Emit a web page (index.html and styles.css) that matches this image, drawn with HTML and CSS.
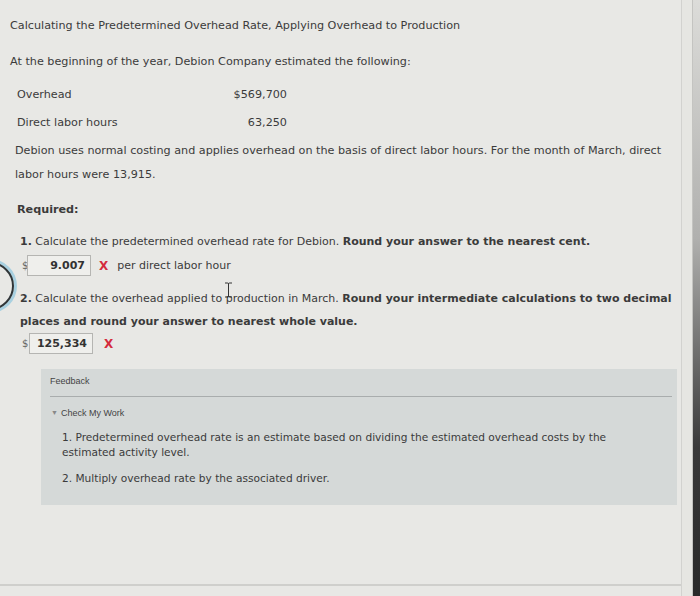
FILE: index.html
```
<!DOCTYPE html>
<html>
<head>
<meta charset="utf-8">
<link rel="stylesheet" href="styles.css">
</head>
<body>
<div class="screen">
  <div class="page">
    <h1 class="title">Calculating the Predetermined Overhead Rate, Applying Overhead to Production</h1>
    <p class="intro">At the beginning of the year, Debion Company estimated the following:</p>
    <div class="data">
      <span class="label">Overhead</span><span class="value">$569,700</span>
      <span class="label">Direct labor hours</span><span class="value">63,250</span>
    </div>
    <p class="desc">Debion uses normal costing and applies overhead on the basis of direct labor hours. For the month of March, direct labor hours were 13,915.</p>
    <div class="required">Required:</div>
    <div class="question q1"><b>1.</b> Calculate the predetermined overhead rate for Debion. <b>Round your answer to the nearest cent.</b></div>
    <div class="answer a1">
      <span class="dollar">$</span><span class="box">9.007</span><span class="wrong">X</span><span class="unit">per direct labor hour</span>
    </div>
    <div class="question q2">
      <div class="q-line"><b>2.</b> Calculate the overhead applied to production in March. <b>Round your intermediate calculations to two decimal</b></div>
      <div class="q-line"><b>places and round your answer to nearest whole value.</b></div>
    </div>
    <div class="answer a2">
      <span class="dollar">$</span><span class="box">125,334</span><span class="wrong">X</span>
    </div>
    <div class="feedback">
      <div class="fb-label">Feedback</div>
      <div class="fb-rule"></div>
      <div class="fb-check"><span class="tri">&#9660;</span>Check My Work</div>
      <ol class="fb-list">
        <li>Predetermined overhead rate is an estimate based on dividing the estimated overhead costs by the estimated activity level.</li>
        <li>Multiply overhead rate by the associated driver.</li>
      </ol>
    </div>
    <div class="bottom-line"></div>
  </div>
  <div class="edge"></div>
</div>
<div class="ring"></div>
<svg class="cursor" width="9" height="16" viewBox="0 0 9 16"><path d="M1 1 H3.5 Q4.5 1 4.5 2 V14 Q4.5 15 3.5 15 H1 M8 1 H5.5 Q4.5 1 4.5 2 M4.5 14 Q4.5 15 5.5 15 H8" fill="none" stroke="#333" stroke-width="1"/></svg>
</body>
</html>
```
FILE: styles.css
```
html, body {
  margin: 0;
  padding: 0;
}
body {
  width: 700px;
  height: 596px;
  overflow: hidden;
  background: #e8e8e5;
  font-family: "DejaVu Sans", Verdana, sans-serif;
  font-size: 11.2px;
  color: #3b3b3b;
  position: relative;
}
.screen {
  display: flex;
  height: 596px;
}
.page {
  width: 682px;
  padding: 18px 0 0 10px;
  box-sizing: border-box;
  display: flex;
  flex-direction: column;
  border-right: 1px solid #d2d2cf;
}
.edge {
  flex: 1;
  display: flex;
}
.edge::before {
  content: "";
  width: 10px;
  background: #e6e6e2;
  border-right: 1px solid #c4c4c1;
}
.edge::after {
  content: "";
  flex: 1;
  background: linear-gradient(180deg, #dcdcd9 0, #b0b0ae 40%, #3a3a3a 75%, #2a2a2a 100%);
}
.title {
  margin: 0;
  font-size: 11.2px;
  font-weight: normal;
  line-height: 16px;
}
.intro {
  margin: 20px 0 0;
  line-height: 16px;
}
.data {
  margin: 11px 0 0 7px;
  display: grid;
  grid-template-columns: 200px 70px;
  width: 270px;
  line-height: 28px;
}
.value {
  text-align: right;
}
.desc {
  margin: 2px 0 0 5px;
  line-height: 24px;
  width: 660px;
}
.required {
  margin: 15px 0 0 7px;
  line-height: 16px;
  font-weight: bold;
}
.question {
  margin-left: 10px;
  width: 665px;
  font-size: 11px;
}
.q1 {
  margin-top: 16px;
  line-height: 16px;
}
.q2 {
  margin-top: 11px;
  display: flex;
  flex-direction: column;
  gap: 7px;
  padding-top: 4px;
  line-height: 16px;
}
.answer {
  display: flex;
  align-items: center;
  margin-left: 12px;
  height: 21px;
  font-size: 11px;
}
.a1 {
  margin-top: 5px;
}
.a2 {
  margin-top: 3px;
}
.dollar {
  color: #666;
  width: 5px;
  font-size: 10px;
}
.box {
  box-sizing: border-box;
  height: 21px;
  border: 1px solid #b5b5b2;
  background: #efefec;
  font-weight: bold;
  line-height: 19px;
  text-align: right;
  padding-right: 5px;
  color: #333;
}
.a1 .box {
  width: 64px;
}
.a2 .box {
  width: 64px;
  margin-left: 2px;
}
.wrong {
  color: #d42a3c;
  font-weight: bold;
  font-size: 12px;
  margin-left: 8px;
}
.a2 .wrong {
  margin-left: 11px;
}
.unit {
  margin-left: 9px;
}
.feedback {
  margin: 15px 0 0 31px;
  width: 636px;
  height: 136px;
  box-sizing: border-box;
  background: #d5d9d8;
  padding: 6px 5px 0 9px;
}
.fb-label {
  font-family: "Liberation Sans", Arial, sans-serif;
  font-size: 9px;
  line-height: 12px;
  color: #444;
}
.fb-rule {
  margin-top: 9px;
  height: 1px;
  background: #a9adad;
}
.fb-check {
  margin-top: 10px;
  font-family: "Liberation Sans", Arial, sans-serif;
  font-size: 9px;
  line-height: 12px;
  color: #444;
  padding-left: 1px;
}
.tri {
  font-size: 7px;
  color: #888;
  margin-right: 3px;
  vertical-align: 1px;
}
.fb-list {
  margin: 11px 0 0;
  width: 580px;
  font-size: 10.6px;
  line-height: 15px;
  list-style-position: inside;
  padding-left: 12px;
}
.fb-list li + li {
  margin-top: 11px;
}
.bottom-line {
  margin: auto 0 10px -10px;
  height: 2px;
  background: #cfcfcc;
}
.ring {
  position: absolute;
  left: -34px;
  top: 262px;
  width: 44px;
  height: 44px;
  border-radius: 50%;
  border: 2px solid #2f3538;
  box-shadow: 0 0 0 3px #a8d0e0;
}
.cursor {
  position: absolute;
  left: 224px;
  top: 282px;
}
```
